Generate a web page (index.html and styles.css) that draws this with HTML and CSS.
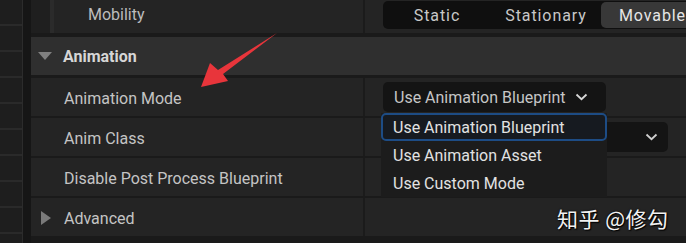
FILE: index.html
```html
<!DOCTYPE html>
<html>
<head>
<meta charset="utf-8">
<link rel="stylesheet" href="styles.css">
</head>
<body>
<div class="app">
  <aside class="strip">
    <div class="strip-grid"></div>
    <div class="strip-line"></div>
    <div class="strip-edge"></div>
  </aside>
  <main class="panel">
    <div class="row row-mobility">
      <div class="name nested">
        <span class="indent-col"></span>
        <span class="label">Mobility</span>
      </div>
      <div class="value">
        <div class="seg">
          <span class="seg-item">Static</span>
          <span class="seg-item">Stationary</span>
          <span class="seg-item active">Movable</span>
        </div>
      </div>
    </div>
    <div class="category">
      <span class="tri-down"></span>
      <span class="cat-label">Animation</span>
    </div>
    <div class="row">
      <div class="name"><span class="label">Animation Mode</span></div>
      <div class="value">
        <div class="combo">
          <span>Use Animation Blueprint</span>
          <svg class="chev" width="13" height="8" viewBox="0 0 13 8"><path d="M1.5 1.5 L6.5 6.2 L11.5 1.5" fill="none" stroke="#d8d8d8" stroke-width="1.8"/></svg>
        </div>
      </div>
    </div>
    <div class="row">
      <div class="name"><span class="label">Anim Class</span></div>
      <div class="value">
        <div class="combo wide">
          <span></span>
          <svg class="chev" width="13" height="8" viewBox="0 0 13 8"><path d="M1.5 1.5 L6.5 6.2 L11.5 1.5" fill="none" stroke="#d0d0d0" stroke-width="1.8"/></svg>
        </div>
      </div>
    </div>
    <div class="row">
      <div class="name"><span class="label">Disable Post Process Blueprint</span></div>
      <div class="value"></div>
    </div>
    <div class="row row-adv">
      <div class="name adv">
        <span class="tri-right"></span>
        <span class="label">Advanced</span>
      </div>
      <div class="value"></div>
    </div>
  </main>
</div>

<div class="menu">
  <div class="menu-item selected">Use Animation Blueprint</div>
  <div class="menu-item">Use Animation Asset</div>
  <div class="menu-item">Use Custom Mode</div>
</div>

<svg class="arrow" width="686" height="243" viewBox="0 0 686 243">
  <polygon points="277,33 223,74 228,81 201,87 210,63 218,70" fill="#e8353b"/>
</svg>

<div class="watermark">知乎 @修勾</div>
</body>
</html>
```
FILE: styles.css
```css
html, body {
  margin: 0;
  padding: 0;
}
body {
  width: 686px;
  height: 243px;
  overflow: hidden;
  background: #1b1b1b;
  font-family: Roboto, "Noto Sans", "Liberation Sans", sans-serif;
  font-size: 16px;
  color: #c4c4c4;
  position: relative;
}
.app {
  display: flex;
  height: 243px;
}
.strip {
  display: flex;
  width: 31px;
  flex: none;
}
.strip-grid {
  width: 22px;
  background:
    repeating-linear-gradient(to bottom, #1e1e1e 0 24px, #2a2a2a 24px 26px);
}
.strip-line {
  width: 1px;
  background: #2c2c2c;
}
.strip-edge {
  width: 8px;
  background: #161616;
}
.panel {
  flex: 1;
  display: flex;
  flex-direction: column;
  background: #1a1a1a;
}
.row {
  display: grid;
  grid-template-columns: 332px 1fr;
  height: 38px;
  margin-bottom: 2px;
  flex: none;
}
.row-mobility {
  height: 33px;
  margin-bottom: 4px;
}
.name {
  display: flex;
  align-items: center;
  padding-left: 33px;
  padding-top: 2px;
  box-sizing: border-box;
  background: #242424;
}
.name.nested {
  padding-left: 0;
  padding-top: 0;
}
.indent-col {
  width: 19px;
  height: 100%;
  background: #1f1f1f;
  border-right: 4px solid #2b2b2b;
  margin-right: 34px;
}
.row-mobility .label {
  color: #bcbcbc;
  padding-bottom: 5px;
}
.value {
  background: #242424;
  border-left: 2px solid #1b1b1b;
  padding-left: 18px;
  display: flex;
  align-items: center;
}
.seg {
  align-self: flex-start;
  margin-top: 1px;
  height: 28px;
  flex: 1;
  display: flex;
  align-items: stretch;
  background: #0f0f0f;
  border-radius: 5px 0 0 5px;
  letter-spacing: 0.9px;
  color: #c8c8c8;
}
.seg-item {
  display: flex;
  align-items: center;
  justify-content: center;
}
.seg-item:nth-child(1) { width: 108px; }
.seg-item:nth-child(2) { width: 110px; }
.seg-item.active {
  flex: 1;
  margin: 1px 0;
  background: #383838;
  border-radius: 5px 0 0 5px;
  color: #e6e6e6;
  justify-content: flex-start;
  padding-left: 18px;
}
.category {
  height: 38px;
  margin-bottom: 3px;
  background: #2f2f2f;
  display: flex;
  align-items: center;
  flex: none;
}
.tri-down {
  width: 0;
  height: 0;
  margin-left: 7px;
  margin-right: 11px;
  border-left: 7.5px solid transparent;
  border-right: 7.5px solid transparent;
  border-top: 8px solid #808080;
}
.cat-label {
  font-weight: bold;
  color: #d6d6d6;
}
.combo {
  width: 223px;
  height: 30px;
  box-sizing: border-box;
  background: #141414;
  border-radius: 5px;
  display: flex;
  align-items: center;
  justify-content: space-between;
  padding: 0 18px 0 11px;
  color: #c6c6c6;
}
.combo.wide {
  width: 285px;
  padding-right: 10px;
}
.row-adv {
  margin-bottom: 0;
}
.name.adv {
  padding-left: 10px;
}
.tri-right {
  width: 0;
  height: 0;
  margin-right: 13px;
  border-top: 7.5px solid transparent;
  border-bottom: 7.5px solid transparent;
  border-left: 10px solid #7a7a7a;
}
.menu {
  position: absolute;
  left: 381px;
  top: 113px;
  width: 226px;
  height: 84px;
  background: #1c1c1c;
  display: flex;
  flex-direction: column;
}
.menu-item {
  height: 28px;
  box-sizing: border-box;
  display: flex;
  align-items: center;
  padding-left: 12px;
  color: #e2e2e2;
}
.menu-item.selected {
  border: 2px solid #1d4c85;
  border-radius: 5px;
  background: #161a20;
  padding-left: 10px;
}
.arrow {
  position: absolute;
  left: 0;
  top: 0;
  pointer-events: none;
}
.watermark {
  position: absolute;
  left: 557px;
  top: 203px;
  font-family: "Noto Sans CJK SC", sans-serif;
  font-size: 21px;
  color: #f2f2f2;
  text-shadow: 0 0 2px #000, 1px 1px 1px #000;
  letter-spacing: 0.5px;
}
```
